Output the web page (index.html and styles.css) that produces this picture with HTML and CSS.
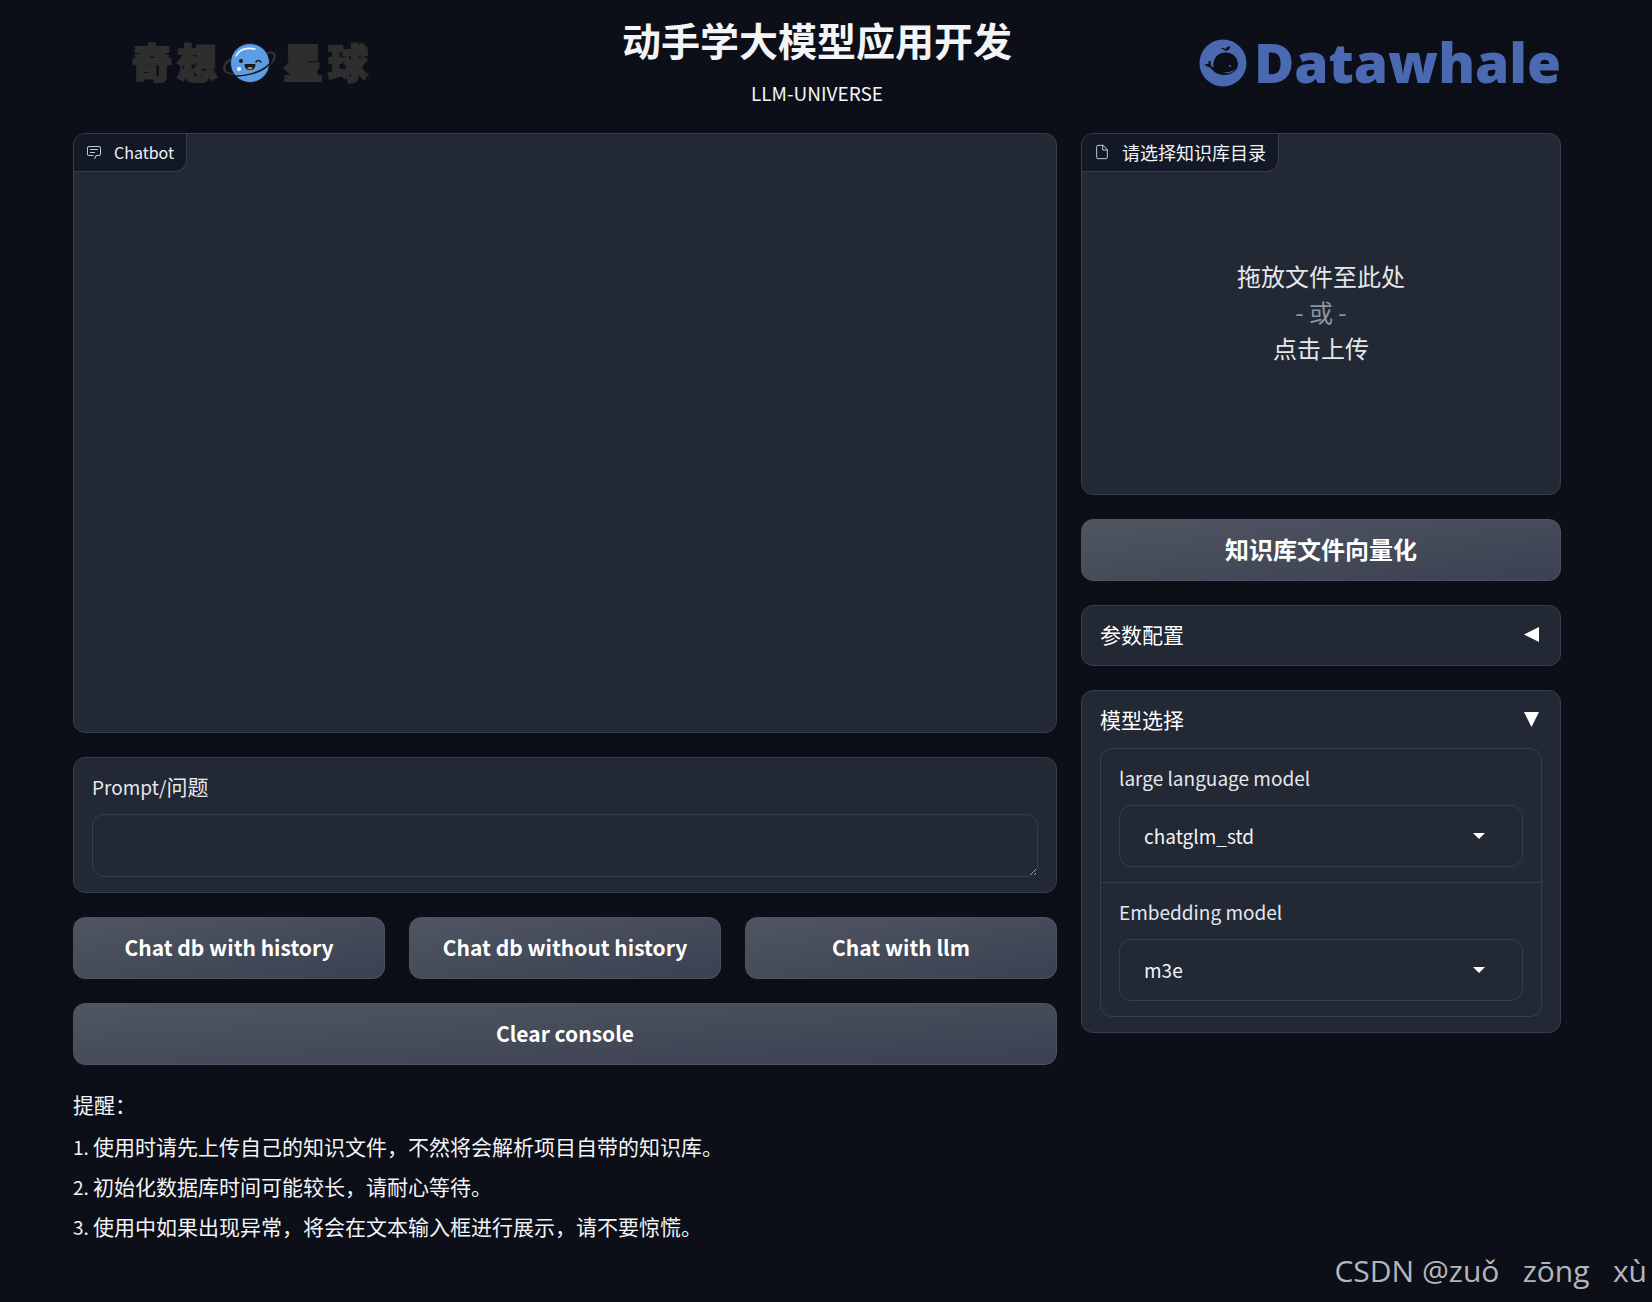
FILE: index.html
```html
<!DOCTYPE html>
<html lang="zh-CN">
<head>
<meta charset="utf-8">
<meta name="viewport" content="width=device-width, initial-scale=1">
<title>动手学大模型应用开发</title>
<link rel="stylesheet" href="styles.css">
</head>
<body>
<div class="page">
  <header class="header">
    <div class="brand">
      <span>奇</span><span>想</span>
      <svg class="planet" viewBox="0 0 56 44" aria-hidden="true">
        <path d="M10 18C3 21 1 26 3 30C6 34 16 33 28 30" fill="none" stroke="#33363c" stroke-width="2"/>
        <path d="M45 12C52 10 54 14 52 18C50 24 40 28 28 30" fill="none" stroke="#33363c" stroke-width="2"/>
        <circle cx="28" cy="22" r="19.500" fill="#5d9de6" stroke="#1b1f26" stroke-width="1"/>
        <path d="M14 15C17 9 23 6 33 8" fill="none" stroke="#eaf4ff" stroke-width="1.500" stroke-linecap="round"/>
        <circle cx="19" cy="20" r="2" fill="#14181f"/>
        <path d="M34 21q2-3 5 0" fill="none" stroke="#14181f" stroke-width="1.500" stroke-linecap="round"/>
        <circle cx="17" cy="28" r="2" fill="#fff"/>
        <path d="M22.500 23h11q0 6-5.500 6t-5.500-6z" fill="#14181f"/>
        <path d="M25 27q3-2 6 0q-3 2.500-6 0z" fill="#d98a2b"/>
        <path d="M6 34C20 37 42 32 50 20" fill="none" stroke="#14181f" stroke-width="1.500"/>
      </svg>
      <span>星</span><span>球</span>
    </div>
    <div class="heading">
      <h1>动手学大模型应用开发</h1>
      <p>LLM-UNIVERSE</p>
    </div>
    <div class="datawhale">
      <svg viewBox="0 0 48 48" class="whale" aria-hidden="true">
        <circle cx="24" cy="24" r="23.500" fill="#4a69b0"/>
        <path d="M5.500 25.500C7 24.500 8.500 25 9.500 25.200C9 23 9.500 22 11 21.500C12 23 12 25 11.800 26.500C13 28 14 28.500 14.500 28C13.500 19 19 13.500 26.500 13.500C34 13.500 39 19 39 25C39 31 33 36 25.500 36C18 36 13.500 31.500 11 28.200C8.500 28 6.500 27 5.500 25.500z" fill="#0c0f18"/>
        <path d="M24 33.500C29 34 33 32.500 36 30C34 33.500 29 35.500 24 33.500z" fill="#4a69b0"/>
        <circle cx="31" cy="27" r="1" fill="#4a69b0"/>
        <path d="M26.500 12C25.500 10.500 24 10.500 22 9.500C24 8.500 26 9.500 26.800 10.500C27 8 29 7 31.500 7.500C31 10 29 11.500 26.500 12z" fill="#0c0f18"/>
      </svg>
      <span>Datawhale</span>
    </div>
  </header>

  <main class="columns">
    <section class="column">
      <div class="panel chat">
        <div class="tag">
          <svg class="tag-icon" viewBox="0 0 32 32" aria-hidden="true"><path fill="currentColor" d="M17.740 30L16 29l4-7h6a2 2 0 0 0 2-2V8a2 2 0 0 0-2-2H6a2 2 0 0 0-2 2v12a2 2 0 0 0 2 2h9v2H6a4 4 0 0 1-4-4V8a4 4 0 0 1 4-4h20a4 4 0 0 1 4 4v12a4 4 0 0 1-4 4h-4.840ZM8 10h16v2H8zM8 16h10v2H8z"/></svg>
          <span class="tag-latin">Chatbot</span>
        </div>
      </div>
      <div class="panel prompt">
        <label for="prompt"><span class="latin">Prompt/</span>问题</label>
        <textarea id="prompt" rows="1"></textarea>
      </div>
      <div class="actions">
        <button class="btn" type="button">Chat db with history</button>
        <button class="btn" type="button">Chat db without history</button>
        <button class="btn" type="button">Chat with llm</button>
      </div>
      <button class="btn" type="button">Clear console</button>
      <div class="tips">
        <p>提醒：</p>
        <ol>
          <li>使用时请先上传自己的知识文件，不然将会解析项目自带的知识库。</li>
          <li>初始化数据库时间可能较长，请耐心等待。</li>
          <li>使用中如果出现异常，将会在文本输入框进行展示，请不要惊慌。</li>
        </ol>
      </div>
    </section>

    <section class="column">
      <div class="panel upload">
        <div class="tag">
          <svg class="tag-icon" viewBox="0 0 24 24" fill="none" stroke="currentColor" stroke-width="1.500" stroke-linecap="round" stroke-linejoin="round" aria-hidden="true"><path d="M13 2H6a2 2 0 0 0-2 2v16a2 2 0 0 0 2 2h12a2 2 0 0 0 2-2V9z"/><path d="M13 2v7h7"/></svg>
          <span>请选择知识库目录</span>
        </div>
        <button class="dropzone" type="button">
          <span>拖放文件至此处</span>
          <span class="or">- 或 -</span>
          <span>点击上传</span>
        </button>
      </div>
      <button class="btn btn-cjk" type="button">知识库文件向量化</button>
      <details class="panel accordion">
        <summary>参数配置
          <svg class="arrow" viewBox="0 0 14 14" aria-hidden="true"><path d="M0 7L14 0V14z" fill="#fff"/></svg>
        </summary>
      </details>
      <details class="panel accordion" open>
        <summary>模型选择
          <svg class="arrow" viewBox="0 0 14 14" aria-hidden="true"><path d="M0 0H14L7 14z" fill="#fff"/></svg>
        </summary>
        <div class="group">
          <div class="field">
            <label class="latin" for="llm">large language model</label>
            <div class="select">
              <select id="llm"><option>chatglm_std</option></select>
              <svg class="caret" viewBox="0 0 12 6" aria-hidden="true"><path d="M0 0H12L6 6z" fill="#fff"/></svg>
            </div>
          </div>
          <div class="field">
            <label class="latin" for="embedding">Embedding model</label>
            <div class="select">
              <select id="embedding"><option>m3e</option></select>
              <svg class="caret" viewBox="0 0 12 6" aria-hidden="true"><path d="M0 0H12L6 6z" fill="#fff"/></svg>
            </div>
          </div>
        </div>
      </details>
    </section>
  </main>
</div>
<div class="watermark">CSDN @zuǒ   zōng   xù</div>
</body>
</html>
```
FILE: styles.css
```css
* { box-sizing: border-box; }

body {
  position: relative;
  min-height: 100vh;
  margin: 0;
  background: #0c0f18;
  color: #f3f4f6;
  font: 21px/32px "Noto Sans CJK SC", sans-serif;
}

h1, p, ol { margin: 0; }

button, select, textarea { font: inherit; color: inherit; }

.page { padding: 0 91px 0 73px; }

.header {
  display: grid;
  grid-template-columns: 1fr 1fr 1fr;
  align-items: center;
  height: 133px;
  padding-bottom: 8px;
}

.brand {
  display: flex;
  align-items: center;
  gap: 5px;
  padding-left: 59px;
  color: #2e2e2e;
  font-size: 40px;
  font-weight: 900;
  line-height: 40px;
  -webkit-text-stroke: 2px #2e2e2e;
}

.brand span { padding-bottom: 4px; }

.planet { width: 56px; height: 44px; }

.heading {
  padding-bottom: 5px;
  text-align: center;
}

.heading h1 {
  font-size: 39px;
  font-weight: 700;
  line-height: 56px;
}

.heading p {
  padding-top: 10px;
  font-size: 19px;
  line-height: 32px;
}

.datawhale {
  display: flex;
  align-items: center;
  justify-content: flex-end;
  gap: 7px;
  color: #4a69b0;
  font: 900 55px/60px "Noto Sans", sans-serif;
}

.datawhale span { padding-bottom: 2px; }

.whale { width: 48px; height: 48px; }

.columns {
  display: grid;
  grid-template-columns: minmax(0, 1fr) 480px;
  gap: 24px;
  align-items: start;
}

.column {
  display: flex;
  flex-direction: column;
  gap: 24px;
}

.panel {
  border: 1px solid #373e4b;
  border-radius: 12px;
  background: #222834;
  overflow: hidden;
}

.chat { height: 600px; }

.tag {
  display: inline-flex;
  align-items: center;
  gap: 12px;
  height: 38px;
  padding: 0 12px 2px;
  border: solid #373e4b;
  border-width: 0 1px 1px 0;
  border-bottom-right-radius: 12px;
  background: #121825;
  font-size: 18px;
}

.tag-icon { width: 16px; height: 16px; color: #c3c7cf; }

.tag-latin { font-size: 16px; }

.latin { font-size: 19px; }

.prompt { padding: 14px 18px 15px; }

.prompt label {
  display: block;
  margin-bottom: 13px;
  color: #e5e7eb;
  line-height: 28px;
}

textarea {
  display: block;
  width: 100%;
  height: 63px;
  padding: 15px;
  border: 1px solid #373e4b;
  border-radius: 12px;
  background: transparent;
}

.actions {
  display: grid;
  grid-template-columns: repeat(3, 1fr);
  gap: 24px;
}

.btn {
  height: 62px;
  padding: 0 0 2px;
  border: 1px solid #4d5461;
  border-radius: 12px;
  background: linear-gradient(to bottom right, #4f5561, #3b4151);
  color: #fff;
  font-size: 21px;
  font-weight: 700;
}

.btn-cjk { font-size: 24px; }

.tips ol {
  padding: 7px 0 0 20px;
  line-height: 40px;
}

.tips p { line-height: 30px; }

.tips li::marker { font-size: 19px; }

.upload {
  display: flex;
  flex-direction: column;
  align-items: flex-start;
  height: 362px;
}

.dropzone {
  display: flex;
  flex: 1;
  flex-direction: column;
  align-items: center;
  justify-content: center;
  align-self: stretch;
  padding: 0 0 42px;
  border: 0;
  background: none;
  color: #e5e7eb;
  font-size: 24px;
  line-height: 36px;
}

.or { color: #9096a1; }

.accordion { padding: 14px 18px 17px; }

.accordion[open] { padding-bottom: 15px; }

summary {
  display: flex;
  align-items: center;
  justify-content: space-between;
  padding-right: 3px;
  color: #fff;
  line-height: 28px;
  list-style: none;
}

.arrow { width: 15px; height: 15px; }

.group {
  margin-top: 15px;
  border: 1px solid #373e4b;
  border-radius: 12px;
}

.field { padding: 14px 18px 15px; }

.field + .field { border-top: 1px solid #373e4b; }

.field label {
  display: block;
  margin-bottom: 12px;
  color: #e5e7eb;
  line-height: 30px;
}

.select { display: grid; align-items: center; }

.select select {
  grid-area: 1 / 1;
  width: 100%;
  height: 62px;
  padding: 0 24px;
  border: 1px solid #373e4b;
  border-radius: 12px;
  background: transparent;
  font-size: 19px;
  appearance: none;
}

.caret {
  grid-area: 1 / 1;
  justify-self: end;
  width: 12px;
  height: 6px;
  margin-right: 38px;
  pointer-events: none;
}

.watermark {
  position: absolute;
  right: 5px;
  bottom: 11px;
  color: #b5b6b9;
  font: 30px/40px "Open Sans", sans-serif;
  white-space: pre;
}
```
